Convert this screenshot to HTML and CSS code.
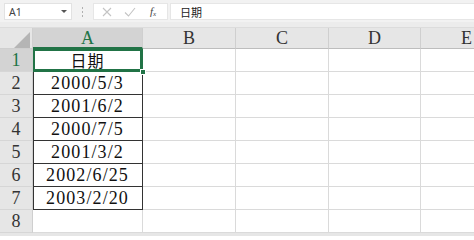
FILE: index.html
```html
<!DOCTYPE html>
<html>
<head>
<meta charset="utf-8">
<link rel="stylesheet" href="styles.css">
</head>
<body>
<div class="app">
  <div class="formula-bar">
    <div class="name-box"><span>A1</span><span class="caret"></span></div>
    <div class="dots"><span></span><span></span><span></span></div>
    <div class="fx-box">
      <svg class="ico" width="10" height="10" viewBox="0 0 10 10"><path d="M1 1L9 9M9 1L1 9" stroke="#c4c4c4" stroke-width="1.1" fill="none"/></svg>
      <svg class="ico" width="12" height="10" viewBox="0 0 12 10"><path d="M1 5.5L4.5 9L11 1" stroke="#c4c4c4" stroke-width="1.1" fill="none"/></svg>
      <span class="fx"><i>f</i><sub>x</sub></span>
    </div>
    <div class="input">日期</div>
  </div>
  <div class="gap"></div>
  <div class="sheet">
    <div class="corner"><svg width="33" height="22" viewBox="0 0 33 22"><polygon points="14,20 30,20 30,4" fill="#b5b5b5"/></svg></div>
    <div class="ch sel">A</div>
    <div class="ch">B</div>
    <div class="ch">C</div>
    <div class="ch">D</div>
    <div class="ch">E</div>

    <div class="rh sel">1</div>
    <div class="cell data active">日期<span class="handle"></span></div>
    <div class="cell"></div><div class="cell"></div><div class="cell"></div><div class="cell"></div>

    <div class="rh">2</div>
    <div class="cell data">2000/5/3</div>
    <div class="cell"></div><div class="cell"></div><div class="cell"></div><div class="cell"></div>

    <div class="rh">3</div>
    <div class="cell data">2001/6/2</div>
    <div class="cell"></div><div class="cell"></div><div class="cell"></div><div class="cell"></div>

    <div class="rh">4</div>
    <div class="cell data">2000/7/5</div>
    <div class="cell"></div><div class="cell"></div><div class="cell"></div><div class="cell"></div>

    <div class="rh">5</div>
    <div class="cell data">2001/3/2</div>
    <div class="cell"></div><div class="cell"></div><div class="cell"></div><div class="cell"></div>

    <div class="rh">6</div>
    <div class="cell data">2002/6/25</div>
    <div class="cell"></div><div class="cell"></div><div class="cell"></div><div class="cell"></div>

    <div class="rh">7</div>
    <div class="cell data">2003/2/20</div>
    <div class="cell"></div><div class="cell"></div><div class="cell"></div><div class="cell"></div>

    <div class="rh">8</div>
    <div class="cell"></div>
    <div class="cell"></div><div class="cell"></div><div class="cell"></div><div class="cell"></div>
  </div>
  <div class="bottom"></div>
</div>
</body>
</html>
```

FILE: styles.css
```css
* { box-sizing: border-box; }
html, body { margin: 0; padding: 0; }
body { width: 474px; height: 236px; overflow: hidden; background: #fff; }
.app { width: 474px; height: 236px; display: flex; flex-direction: column; overflow: hidden; }

.formula-bar {
  height: 22px;
  background: #f2f2f2;
  display: flex;
  align-items: stretch;
  padding: 3px 0 2px 4px;
}
.name-box {
  width: 68px;
  background: #fff;
  border: 1px solid #e2e2e2;
  display: flex;
  align-items: center;
  justify-content: space-between;
  padding: 0 4px 0 4px;
  font-family: "Noto Sans", "Liberation Sans", sans-serif;
  font-size: 10.5px;
  color: #444;
}
.caret {
  width: 0; height: 0;
  border-left: 3px solid transparent;
  border-right: 3px solid transparent;
  border-top: 3px solid #555;
}
.dots {
  width: 21px;
  display: flex;
  flex-direction: column;
  align-items: center;
  justify-content: center;
  gap: 2px;
}
.dots span { width: 1px; height: 2px; background: #b0b0b0; }
.fx-box {
  width: 75px;
  background: #fff;
  border: 1px solid #e6e6e6;
  display: flex;
  align-items: center;
  padding: 0 0 0 8px;
}
.fx-box .ico { margin-right: 12px; }
.fx-box .ico + .ico { margin-right: 14px; }
.fx {
  font-family: "Liberation Serif", serif;
  font-size: 11px;
  color: #444;
  line-height: 1;
}
.fx sub { font-size: 7px; font-style: italic; vertical-align: -1px; }
.input {
  flex: 1;
  margin-left: 2px;
  background: #fff;
  border: 1px solid #e6e6e6;
  border-right: none;
  display: flex;
  align-items: center;
  padding-left: 9px;
  font-family: "Noto Sans CJK SC", sans-serif;
  font-size: 11px;
  color: #222;
}
.gap {
  height: 6px;
  background: #ececec;
  border-bottom: 1px solid #dcdcdc;
}

.sheet {
  display: grid;
  grid-template-columns: 33px 110px 93px 93px 92px 92px;
  grid-template-rows: 21px repeat(8, 23px);
  font-family: "Liberation Serif", "Noto Sans CJK SC", serif;
  width: 513px;
}
.corner {
  background: #e6e6e6;
  border-right: 1px solid #cfcfcf;
  border-bottom: 1px solid #cfcfcf;
}
.corner svg { display: block; }
.ch {
  background: #e6e6e6;
  border-right: 1px solid #cfcfcf;
  border-bottom: 1px solid #bdbdbd;
  display: flex;
  align-items: center;
  justify-content: center;
  font-size: 18px;
  color: #333;
  padding-top: 1px;
}
.ch.sel {
  background: #d3d3d3;
  color: #217346;
  border-bottom: 2px solid #217346;
}
.rh {
  background: #e6e6e6;
  border-right: 1px solid #cfcfcf;
  border-bottom: 1px solid #d6d6d6;
  display: flex;
  align-items: center;
  justify-content: center;
  font-size: 18px;
  color: #333;
}
.rh.sel { background: #d3d3d3; color: #217346; }
.cell {
  border-right: 1px solid #dadada;
  border-bottom: 1px solid #dadada;
  display: flex;
  align-items: center;
  justify-content: center;
  font-size: 18px;
  color: #111;
  letter-spacing: 1.1px;
  position: relative;
}
.cell.data {
  border-right: 1px solid #333;
  border-bottom: 1px solid #333;
  box-shadow: inset 1px 0 0 #333;
}
.cell.active {
  box-shadow: inset 0 0 0 2px #217346;
  border-bottom: 1px solid #217346;
  border-right: 1px solid #217346;
  font-family: "Noto Sans CJK SC", sans-serif;
  font-size: 16px;
  letter-spacing: 1px;
}
.handle {
  position: absolute;
  right: -4px;
  bottom: -4px;
  width: 6px;
  height: 6px;
  background: #217346;
  border: 1px solid #fff;
  z-index: 2;
}
.bottom {
  flex: 1;
  background: #e6e6e6;
}
```
